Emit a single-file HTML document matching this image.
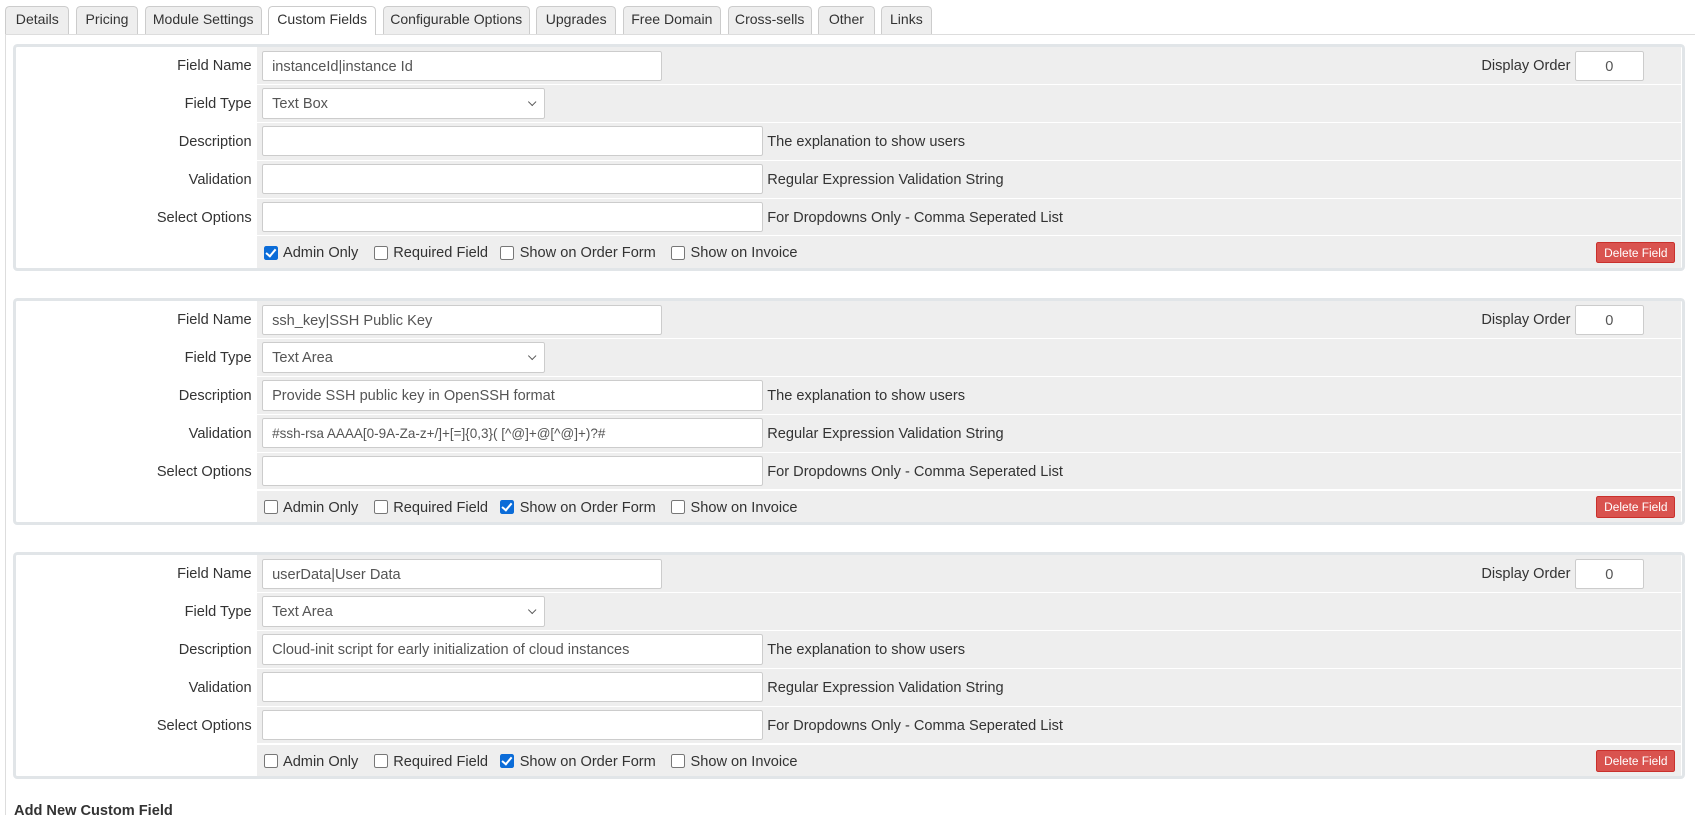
<!DOCTYPE html>
<html><head><meta charset="utf-8"><style>
*{box-sizing:border-box;margin:0;padding:0}
html,body{width:1695px;height:816px;overflow:hidden;background:#fff}
body{font-family:"Liberation Sans",sans-serif;font-size:13.5px;color:#333;position:relative}
#w{position:absolute;left:0;top:0;width:1568px;height:754px;zoom:1.081;overflow:hidden}
.tab{position:absolute;top:6px;height:25px;border:1px solid #ccc;border-bottom:none;border-radius:4px 4px 0 0;background:#eee;text-align:center;line-height:24px;font-size:13px;color:#333;white-space:nowrap}
.tab.act{background:#fff;height:26px;z-index:2}
.panel{position:absolute;left:5px;top:31px;width:1600px;height:740px;border:1px solid #ddd;border-right:none}
.box{position:absolute;left:12px;width:1547px;height:210px;border:3px solid #e1e5e8;border-radius:4px;background:#fff}
.row{position:absolute;left:223px;width:1317px;height:34px;background:#eee}
.lbl{position:absolute;left:0;width:218px;text-align:right;height:34px;line-height:36px}
.inp{position:absolute;top:3px;height:28px;background:#fff;border:1px solid #ccc;border-radius:2px;padding-left:8px;line-height:28px;color:#555;white-space:nowrap;overflow:hidden}
.help{position:absolute;left:472px;line-height:36px;top:0;white-space:nowrap}
.sel::after{content:"";position:absolute;right:8px;top:9px;width:5px;height:5px;border-right:1.3px solid #555;border-bottom:1.3px solid #555;transform:rotate(45deg)}
.cb{position:absolute;top:9px;width:13px;height:13px;border:1.5px solid #777;border-radius:2px;background:#fff}
.cb.on{background:#0b6cd8;border-color:#0b6cd8}
.cb.on::after{content:"";position:absolute;left:3px;top:0px;width:4px;height:7px;border-right:2px solid #fff;border-bottom:2px solid #fff;transform:rotate(40deg)}
.cl{position:absolute;top:0;line-height:32px;white-space:nowrap}
.del{position:absolute;left:1239px;top:5px;width:73px;height:20px;background:#d9534f;border:1px solid #c9302c;border-radius:2px;color:#fff;font-size:11px;text-align:center;line-height:19px}
.dol{position:absolute;right:102px;line-height:36px}
</style></head><body><div id="w">
<div class="panel"></div>
<div class="tab" style="left:5px;width:59px">Details</div>
<div class="tab" style="left:70px;width:58px">Pricing</div>
<div class="tab" style="left:134px;width:108px">Module Settings</div>
<div class="tab act" style="left:248px;width:100px">Custom Fields</div>
<div class="tab" style="left:354px;width:136px">Configurable Options</div>
<div class="tab" style="left:496px;width:74px">Upgrades</div>
<div class="tab" style="left:576px;width:91px">Free Domain</div>
<div class="tab" style="left:673px;width:78px">Cross-sells</div>
<div class="tab" style="left:757px;width:52px">Other</div>
<div class="tab" style="left:815px;width:47px">Links</div>

<div class="box" style="top:41px">
 <div class="lbl" style="top:0">Field Name</div>
 <div class="row" style="top:0"><div class="inp" style="left:5px;width:370px">instanceId|instance Id</div><div class="dol">Display Order</div><div class="inp" style="left:1219px;width:64px;text-align:center;padding:0">0</div></div>
 <div class="lbl" style="top:35px">Field Type</div>
 <div class="row" style="top:35px"><div class="inp sel" style="left:5px;width:261px">Text Box</div></div>
 <div class="lbl" style="top:70px">Description</div>
 <div class="row" style="top:70px"><div class="inp" style="left:5px;width:463px"></div><div class="help">The explanation to show users</div></div>
 <div class="lbl" style="top:105px">Validation</div>
 <div class="row" style="top:105px"><div class="inp" style="left:5px;width:463px"></div><div class="help">Regular Expression Validation String</div></div>
 <div class="lbl" style="top:140px">Select Options</div>
 <div class="row" style="top:140px"><div class="inp" style="left:5px;width:463px"></div><div class="help">For Dropdowns Only - Comma Seperated List</div></div>
 <div class="row" style="top:175px;height:29px"><span class="cb on" style="left:6px"></span><span class="cl" style="left:24px">Admin Only</span><span class="cb" style="left:108px"></span><span class="cl" style="left:126px">Required Field</span><span class="cb" style="left:225px"></span><span class="cl" style="left:243px">Show on Order Form</span><span class="cb" style="left:383px"></span><span class="cl" style="left:401px">Show on Invoice</span><div class="del">Delete Field</div></div>
</div>

<div class="box" style="top:276px">
 <div class="lbl" style="top:0">Field Name</div>
 <div class="row" style="top:0"><div class="inp" style="left:5px;width:370px">ssh_key|SSH Public Key</div><div class="dol">Display Order</div><div class="inp" style="left:1219px;width:64px;text-align:center;padding:0">0</div></div>
 <div class="lbl" style="top:35px">Field Type</div>
 <div class="row" style="top:35px"><div class="inp sel" style="left:5px;width:261px">Text Area</div></div>
 <div class="lbl" style="top:70px">Description</div>
 <div class="row" style="top:70px"><div class="inp" style="left:5px;width:463px">Provide SSH public key in OpenSSH format</div><div class="help">The explanation to show users</div></div>
 <div class="lbl" style="top:105px">Validation</div>
 <div class="row" style="top:105px"><div class="inp" style="left:5px;width:463px;font-size:12.5px">#ssh-rsa AAAA[0-9A-Za-z+/]+[=]{0,3}( [^@]+@[^@]+)?#</div><div class="help">Regular Expression Validation String</div></div>
 <div class="lbl" style="top:140px">Select Options</div>
 <div class="row" style="top:140px"><div class="inp" style="left:5px;width:463px"></div><div class="help">For Dropdowns Only - Comma Seperated List</div></div>
 <div class="row" style="top:175px;height:29px"><span class="cb" style="left:6px"></span><span class="cl" style="left:24px">Admin Only</span><span class="cb" style="left:108px"></span><span class="cl" style="left:126px">Required Field</span><span class="cb on" style="left:225px"></span><span class="cl" style="left:243px">Show on Order Form</span><span class="cb" style="left:383px"></span><span class="cl" style="left:401px">Show on Invoice</span><div class="del">Delete Field</div></div>
</div>

<div class="box" style="top:511px">
 <div class="lbl" style="top:0">Field Name</div>
 <div class="row" style="top:0"><div class="inp" style="left:5px;width:370px">userData|User Data</div><div class="dol">Display Order</div><div class="inp" style="left:1219px;width:64px;text-align:center;padding:0">0</div></div>
 <div class="lbl" style="top:35px">Field Type</div>
 <div class="row" style="top:35px"><div class="inp sel" style="left:5px;width:261px">Text Area</div></div>
 <div class="lbl" style="top:70px">Description</div>
 <div class="row" style="top:70px"><div class="inp" style="left:5px;width:463px">Cloud-init script for early initialization of cloud instances</div><div class="help">The explanation to show users</div></div>
 <div class="lbl" style="top:105px">Validation</div>
 <div class="row" style="top:105px"><div class="inp" style="left:5px;width:463px"></div><div class="help">Regular Expression Validation String</div></div>
 <div class="lbl" style="top:140px">Select Options</div>
 <div class="row" style="top:140px"><div class="inp" style="left:5px;width:463px"></div><div class="help">For Dropdowns Only - Comma Seperated List</div></div>
 <div class="row" style="top:175px;height:29px"><span class="cb" style="left:6px"></span><span class="cl" style="left:24px">Admin Only</span><span class="cb" style="left:108px"></span><span class="cl" style="left:126px">Required Field</span><span class="cb on" style="left:225px"></span><span class="cl" style="left:243px">Show on Order Form</span><span class="cb" style="left:383px"></span><span class="cl" style="left:401px">Show on Invoice</span><div class="del">Delete Field</div></div>
</div>

<div style="position:absolute;left:13px;top:743px;font-weight:bold;font-size:13.5px">Add New Custom Field</div>
</div></body></html>
